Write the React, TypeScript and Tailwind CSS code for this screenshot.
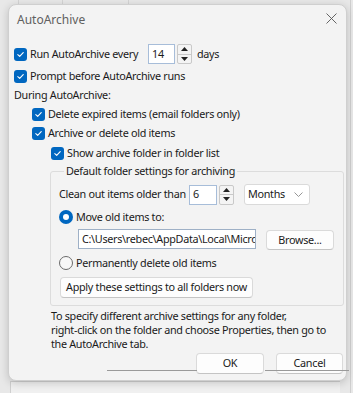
import React from "react";

const font = { fontFamily: '"Noto Sans", "Segoe UI", sans-serif' };

const CheckBox = () => (
  <span className="flex h-[13px] w-[13px] shrink-0 items-center justify-center rounded-[3px] bg-[#0067c0]">
    <svg width="9" height="9" viewBox="0 0 10 10" fill="none">
      <path d="M2 5.2 L4.1 7.2 L8 2.8" stroke="white" strokeWidth="1.2" strokeLinecap="round" strokeLinejoin="round" />
    </svg>
  </span>
);

const Radio = ({ on }: { on?: boolean }) =>
  on ? (
    <span className="flex h-[14px] w-[14px] shrink-0 items-center justify-center rounded-full bg-[#0067c0]">
      <span className="h-[6px] w-[6px] rounded-full bg-white" />
    </span>
  ) : (
    <span className="h-[14px] w-[14px] shrink-0 rounded-full border border-[#6b6b6b] bg-[#f8f8f8]" />
  );

const Spinner = () => (
  <div className="ml-[2px] flex h-[20px] w-[15px] flex-col overflow-hidden rounded-[2px] border border-[#c9c9c9] bg-[#f4f4f4]">
    <div className="flex flex-1 items-center justify-center border-b border-[#c9c9c9]">
      <svg width="7" height="4" viewBox="0 0 7 4">
        <path d="M0 4 L3.5 0 L7 4 Z" fill="#222" />
      </svg>
    </div>
    <div className="flex flex-1 items-center justify-center">
      <svg width="7" height="4" viewBox="0 0 7 4">
        <path d="M0 0 L3.5 4 L7 0 Z" fill="#222" />
      </svg>
    </div>
  </div>
);

const Button = ({ label, w }: { label: string; w: string }) => (
  <div
    className={`flex h-[21px] items-center justify-center whitespace-nowrap rounded-[4px] border border-[#dadada] border-b-[#c4c4c4] bg-[#fdfdfd] text-[#1a1a1a] ${w}`}
  >
    {label}
  </div>
);

export default function App() {
  return (
    <div className="relative h-[393px] w-[353px] overflow-hidden bg-[#e8e8e8] pt-[4px]" style={font}>
      {/* window behind the dialog */}
      <div className="absolute left-[18px] top-0 h-[5px] w-px bg-[#d4d4d4]" />
      <div className="absolute left-[62px] top-0 h-[5px] w-px bg-[#d4d4d4]" />
      <div className="absolute left-[128px] top-0 h-[5px] w-px bg-[#d4d4d4]" />
      <div className="absolute right-[2px] top-0 h-full w-px bg-[#cfcfcf]" />
      <div className="absolute bottom-0 left-[10px] h-[12px] w-[330px] border-l border-t border-[#cfcfcf] bg-[#f0f0f0]" />

      <div className="relative ml-[8px] w-[339px] whitespace-nowrap rounded-[8px] border border-[#cfcfcf] bg-[#f3f3f3] pb-[6px] text-[10.8px] tracking-[-0.3px] text-[#1a1a1a] shadow-[0_2px_8px_rgba(0,0,0,0.18)]">
        {/* title bar */}
        <div className="flex h-[39px] items-start justify-between pl-[8px] pr-[9px] pt-[6px]">
          <span className="text-[12px] leading-[18px] tracking-normal text-[#606060]">AutoArchive</span>
          <svg width="11" height="11" viewBox="0 0 11 11" className="mt-[2px]">
            <path d="M0.5 0.5 L10.5 10.5 M10.5 0.5 L0.5 10.5" stroke="#555" strokeWidth="0.9" />
          </svg>
        </div>

        <div className="pl-[5px]">
          <div className="flex h-[20px] items-center">
            <CheckBox />
            <span className="ml-[3px] w-[118px]">Run AutoArchive every</span>
            <div className="flex h-[20px] w-[27px] items-center border border-[#a7bdd9] bg-white pl-[3px]">14</div>
            <Spinner />
            <span className="ml-[5px]">days</span>
          </div>
          <div className="mt-[3px] flex h-[19px] items-center">
            <CheckBox />
            <span className="ml-[3px]">Prompt before AutoArchive runs</span>
          </div>
          <div className="flex h-[19px] items-center">During AutoArchive:</div>
          <div className="flex h-[19px] items-center pl-[18px]">
            <CheckBox />
            <span className="ml-[3px]">Delete expired items (email folders only)</span>
          </div>
          <div className="flex h-[19px] items-center pl-[18px]">
            <CheckBox />
            <span className="ml-[3px]">Archive or delete old items</span>
          </div>
          <div className="mt-[1px] flex h-[19px] items-center pl-[37px]">
            <CheckBox />
            <span className="ml-[3px]">Show archive folder in folder list</span>
          </div>

          <fieldset className="ml-[36px] mr-[2px] rounded-[3px] border border-[#dcdcdc] pb-[7px] pl-[8px]">
            <legend className="ml-[5px] px-[2px] leading-[16px]">Default folder settings for archiving</legend>
            <div className="mt-[5px] flex h-[21px] items-center">
              <span className="w-[130px]">Clean out items older than</span>
              <div className="flex h-[20px] w-[28px] items-center border border-[#a7bdd9] bg-white pl-[3px]">6</div>
              <Spinner />
              <div className="ml-[10px] flex h-[21px] w-[66px] items-center justify-between rounded-[3px] border border-[#dadada] bg-white pl-[3px] pr-[6px]">
                <span>Months</span>
                <svg width="9" height="5" viewBox="0 0 9 5">
                  <path d="M0.5 0.5 L4.5 4.5 L8.5 0.5" stroke="#8a8a8a" fill="none" strokeWidth="0.9" />
                </svg>
              </div>
            </div>
            <div className="mt-[3px] flex h-[18px] items-center">
              <Radio on />
              <span className="ml-[3px]">Move old items to:</span>
            </div>
            <div className="mt-[3px] flex h-[21px] items-start pl-[19px]">
              <div className="flex h-[20px] w-[178px] items-center overflow-hidden border border-[#9eb0c6] bg-white pl-[3px]">
                C:\Users\rebec\AppData\Local\Micro
              </div>
              <div className="ml-[10px] mt-[1px] flex h-[20px] w-[68px] items-center justify-center rounded-[4px] border border-[#dadada] border-b-[#c4c4c4] bg-[#fdfdfd]">
                Browse...
              </div>
            </div>
            <div className="mt-[4px] flex h-[18px] items-center">
              <Radio />
              <span className="ml-[3px]">Permanently delete old items</span>
            </div>
            <div className="ml-[1px] mt-[5px] flex">
              <Button label="Apply these settings to all folders now" w="w-[193px]" />
            </div>
          </fieldset>

          <p className="mt-[3px] pl-[37px] leading-[14px]">
            To specify different archive settings for any folder,
            <br />
            right-click on the folder and choose Properties, then go to
            <br />
            the AutoArchive tab.
          </p>

          <div className="mt-[2px] flex justify-end gap-[12px] pr-[3px]">
            <Button label="OK" w="w-[68px]" />
            <Button label="Cancel" w="w-[67px]" />
          </div>
        </div>

        {/* stray line from the window underneath */}
        <div className="absolute left-[98px] top-[365px] h-px w-[90px] bg-[#9a9a9a]" />
        <div className="absolute left-[256px] top-[365px] h-px w-[84px] bg-[#9a9a9a]" />
      </div>
    </div>
  );
}
